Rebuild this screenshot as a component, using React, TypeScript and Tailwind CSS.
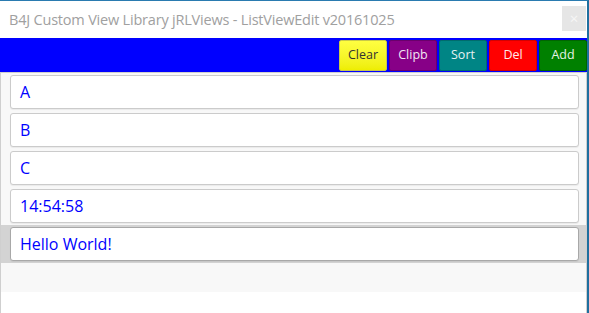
import React from "react";

const buttons = [
  { label: "Clear", cls: "bg-gradient-to-b from-[#ffff40] to-[#eeee00] border-[#c9c94a] text-[#333333]" },
  { label: "Clipb", cls: "bg-[#870087] border-[#6a006a] text-[#f2e6f2]" },
  { label: "Sort", cls: "bg-[#008585] border-[#006c6c] text-[#e6f2f2]" },
  { label: "Del", cls: "bg-[#ff0000] border-[#d40000] text-[#ffeaea]" },
  { label: "Add", cls: "bg-[#008000] border-[#006600] text-[#e6f2e6]" },
];

const items = ["A", "B", "C", "14:54:58", "Hello World!"];

export default function App() {
  const selected = 4;

  return (
    <div
      className="w-[589px] h-[313px] bg-white border-t border-t-[#2a7bb0] border-r-2 border-r-[#1f6f9f] flex flex-col overflow-hidden"
      style={{ fontFamily: '"Open Sans", "Noto Sans", sans-serif' }}
    >
      {/* title bar */}
      <div className="h-[37px] shrink-0 flex items-center justify-between pl-[9px] pr-[1px]">
        <span className="text-[14.5px] text-[#a0a0a0] tracking-[-0.2px]">
          B4J Custom View Library jRLViews - ListViewEdit v20161025
        </span>
        <div className="w-[24px] h-[25px] bg-[#e6e6e6] flex items-center justify-center text-[#f6f6f6] text-[15px] mt-[-3px]">
          ×
        </div>
      </div>

      {/* toolbar */}
      <div className="h-[34px] shrink-0 bg-[#0000ff] flex items-center justify-end gap-[2px] pr-0">
        {buttons.map((b) => (
          <div
            key={b.label}
            className={`w-[48px] h-[31px] border rounded-[2px] flex items-center justify-center text-[12.5px] ${b.cls}`}
          >
            {b.label}
          </div>
        ))}
      </div>

      {/* list */}
      <div className="flex-1 border-l border-r border-t border-[#cfcfcf] flex flex-col">
        <div className="h-[219px] bg-[#f8f8f8] flex flex-col">
          {items.map((t, i) => (
            <div
              key={t}
              className={`h-[38px] shrink-0 pl-[9px] pr-[7px] py-[2px] ${i === selected ? "bg-[#d3d3d3]" : ""}`}
            >
              <div
                className={`h-[34px] bg-white rounded-[3px] border flex items-center pl-[9px] text-[16px] text-[#0000ff] shadow-[0_1px_1px_rgba(0,0,0,0.06)] ${
                  i === selected ? "border-[#a8a8a8]" : "border-[#cbcbcb]"
                }`}
              >
                {t}
              </div>
            </div>
          ))}
        </div>
        <div className="flex-1 bg-white" />
      </div>
    </div>
  );
}
